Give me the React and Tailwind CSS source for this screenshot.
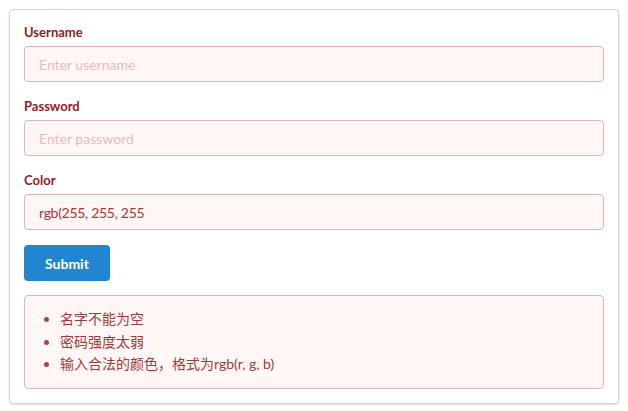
import { useState } from "react";

const errors = ["名字不能为空", "密码强度太弱", "输入合法的颜色，格式为rgb(r, g, b)"];

function Field({ label, type = "text", placeholder, value, onChange }) {
  return (
    <div className="mb-[16px] flex flex-col">
      <label className="mb-[6px] text-[13px] font-bold leading-[16px] text-[#921c1c]">{label}</label>
      <input
        type={type}
        placeholder={placeholder}
        value={value}
        onChange={onChange}
        className="h-[36px] w-full rounded-[4px] border border-[#e0b4b4] bg-[#fff6f6] px-[14px] text-[14px] text-[#9f3a38] outline-none placeholder:text-[#e7bdbc]"
      />
    </div>
  );
}

export default function App() {
  const [form, setForm] = useState({ username: "", password: "", color: "rgb(255, 255, 255" });

  const update = (key) => (e) => setForm((current) => ({ ...current, [key]: e.target.value }));

  return (
    <div className="min-h-screen bg-white p-[9px] font-['Lato','Noto_Sans_CJK_SC',sans-serif]">
      <div className="rounded-[4px] border border-[#d4d4d5] bg-white p-[14px] shadow-[0_1px_2px_0_rgba(34,36,38,0.15)]">
        <Field label="Username" placeholder="Enter username" value={form.username} onChange={update("username")} />
        <Field label="Password" type="password" placeholder="Enter password" value={form.password} onChange={update("password")} />
        <div className="mb-[15px] flex flex-col">
          <label className="mb-[6px] text-[13px] font-bold leading-[16px] text-[#921c1c]">Color</label>
          <input
            value={form.color}
            onChange={update("color")}
            className="h-[36px] w-full rounded-[4px] border border-[#e0b4b4] bg-[#fff6f6] px-[14px] text-[14px] tracking-[-0.3px] text-[#9f3a38] outline-none"
          />
        </div>
        <button
          type="button"
          className="mb-[14px] h-[36px] rounded-[4px] bg-[#2185d0] px-[21px] text-[14px] font-bold text-white"
        >
          Submit
        </button>
        <div className="rounded-[4px] border border-[#e0b4b4] bg-[#fff6f6] px-[21px] py-[12px] text-[14px] text-[#9f3a38]">
          <ul className="list-disc pl-[14px] marker:text-[#a94442]">
            {errors.map((item) => (
              <li key={item} className="leading-[22.5px]">{item}</li>
            ))}
          </ul>
        </div>
      </div>
    </div>
  );
}
